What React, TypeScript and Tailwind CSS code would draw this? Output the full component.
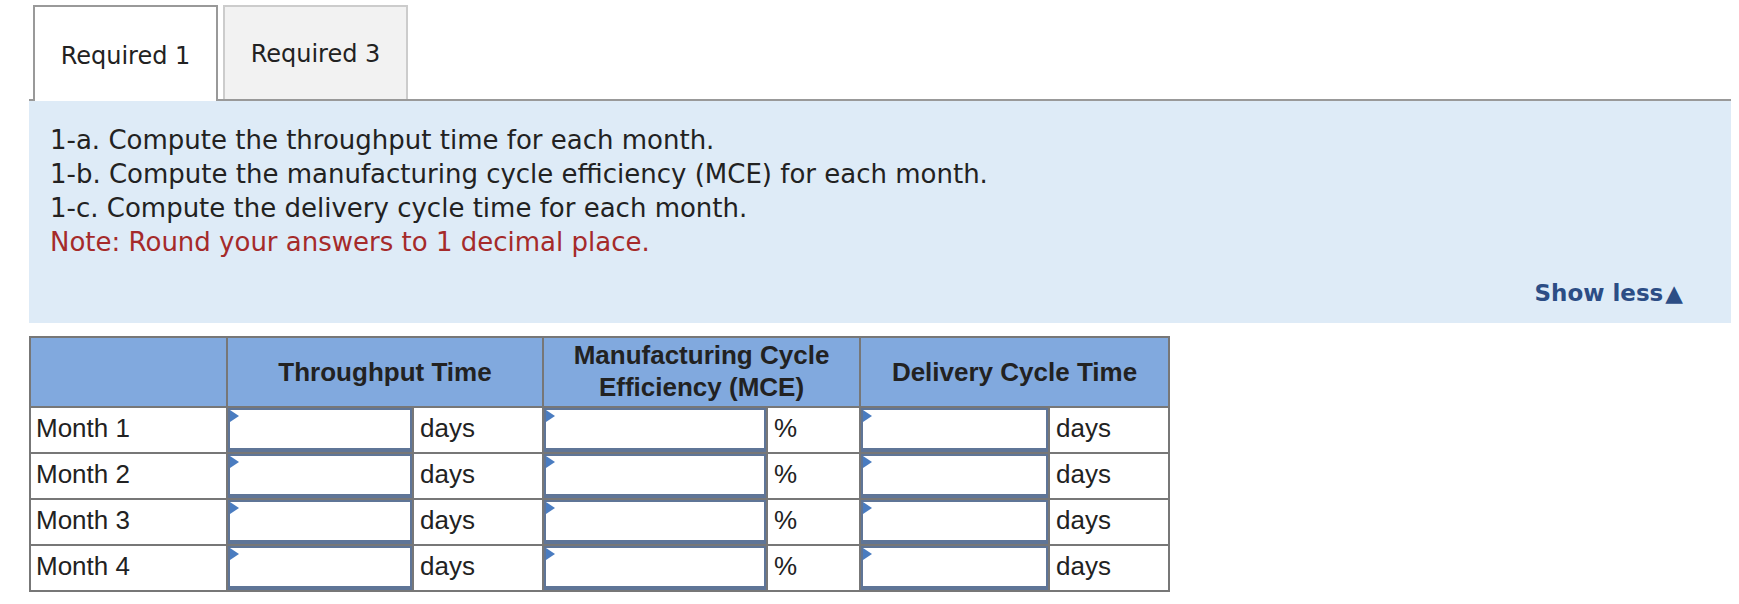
import React from 'react';

const verdana = { fontFamily: '"DejaVu Sans", Verdana, sans-serif' };

const months = ['Month 1', 'Month 2', 'Month 3', 'Month 4'];

const AnswerInput: React.FC = () => (
  <td className="p-0 border-2 border-[#777] h-[46px]">
    <div className="relative h-full w-full">
      <input
        type="text"
        className="block w-full h-[44px] bg-white border-2 border-b-4 border-[#5f7597] outline-none px-2 text-[22px]"
      />
      <span className="absolute left-[2px] top-[2px] w-0 h-0 border-y-[6px] border-y-transparent border-l-[9px] border-l-[#4a7cc0]" />
    </div>
  </td>
);

const Unit: React.FC<{ label: string }> = ({ label }) => (
  <td className="border-2 border-[#777] px-[6px] pb-[4px] text-left align-middle">{label}</td>
);

export default function App() {
  return (
    <div className="bg-white w-[1739px] h-[604px] pl-[29px] pr-[8px] pt-[5px]" style={verdana}>
      {/* tabs */}
      <div className="flex items-end border-b-2 border-[#999] w-[1702px]">
        <div className="ml-[4px] w-[185px] h-[96px] -mb-[2px] pt-[4px] bg-white border-2 border-b-0 border-[#999] flex items-center justify-center text-[24px] text-[#222]">
          Required 1
        </div>
        <div className="ml-[5px] w-[185px] h-[94px] pt-[2px] bg-[#f2f2f2] border-2 border-b-0 border-[#ccc] flex items-center justify-center text-[24px] text-[#222]">
          Required 3
        </div>
      </div>

      {/* instructions */}
      <div className="w-[1702px] h-[222px] bg-[#deebf7] pl-[21px] pr-[48px] pt-[22px] text-[26px] leading-[34px] text-[#222]">
        <p>1-a. Compute the throughput time for each month.</p>
        <p>1-b. Compute the manufacturing cycle efficiency (MCE) for each month.</p>
        <p>1-c. Compute the delivery cycle time for each month.</p>
        <p className="text-[#a52a2a]">Note: Round your answers to 1 decimal place.</p>
        <div className="flex justify-end mt-[17px]">
          <span className="font-bold text-[23px] text-[#2c4d85]">
            Show less<span className="ml-[2px]">▲</span>
          </span>
        </div>
      </div>

      {/* answer table */}
      <table
        className="mt-[13px] border-collapse border-2 border-[#777] text-[26px] text-[#222]"
        style={{ fontFamily: '"Liberation Sans", Arial, sans-serif' }}
      >
        <colgroup>
          <col className="w-[197px]" />
          <col className="w-[186px]" />
          <col className="w-[130px]" />
          <col className="w-[224px]" />
          <col className="w-[93px]" />
          <col className="w-[189px]" />
          <col className="w-[120px]" />
        </colgroup>
        <thead>
          <tr className="bg-[#81a9de] h-[70px]">
            <th className="border-2 border-[#777]" />
            <th colSpan={2} className="border-2 border-[#777] font-bold leading-[32px]">
              Throughput Time
            </th>
            <th colSpan={2} className="border-2 border-[#777] font-bold leading-[32px] pb-[2px]">
              Manufacturing Cycle
              <br />
              Efficiency (MCE)
            </th>
            <th colSpan={2} className="border-2 border-[#777] font-bold leading-[32px]">
              Delivery Cycle Time
            </th>
          </tr>
        </thead>
        <tbody>
          {months.map((m) => (
            <tr key={m} className="h-[46px]">
              <td className="border-2 border-[#777] px-[5px] pb-[4px] text-left">{m}</td>
              <AnswerInput />
              <Unit label="days" />
              <AnswerInput />
              <Unit label="%" />
              <AnswerInput />
              <Unit label="days" />
            </tr>
          ))}
        </tbody>
      </table>
    </div>
  );
}
